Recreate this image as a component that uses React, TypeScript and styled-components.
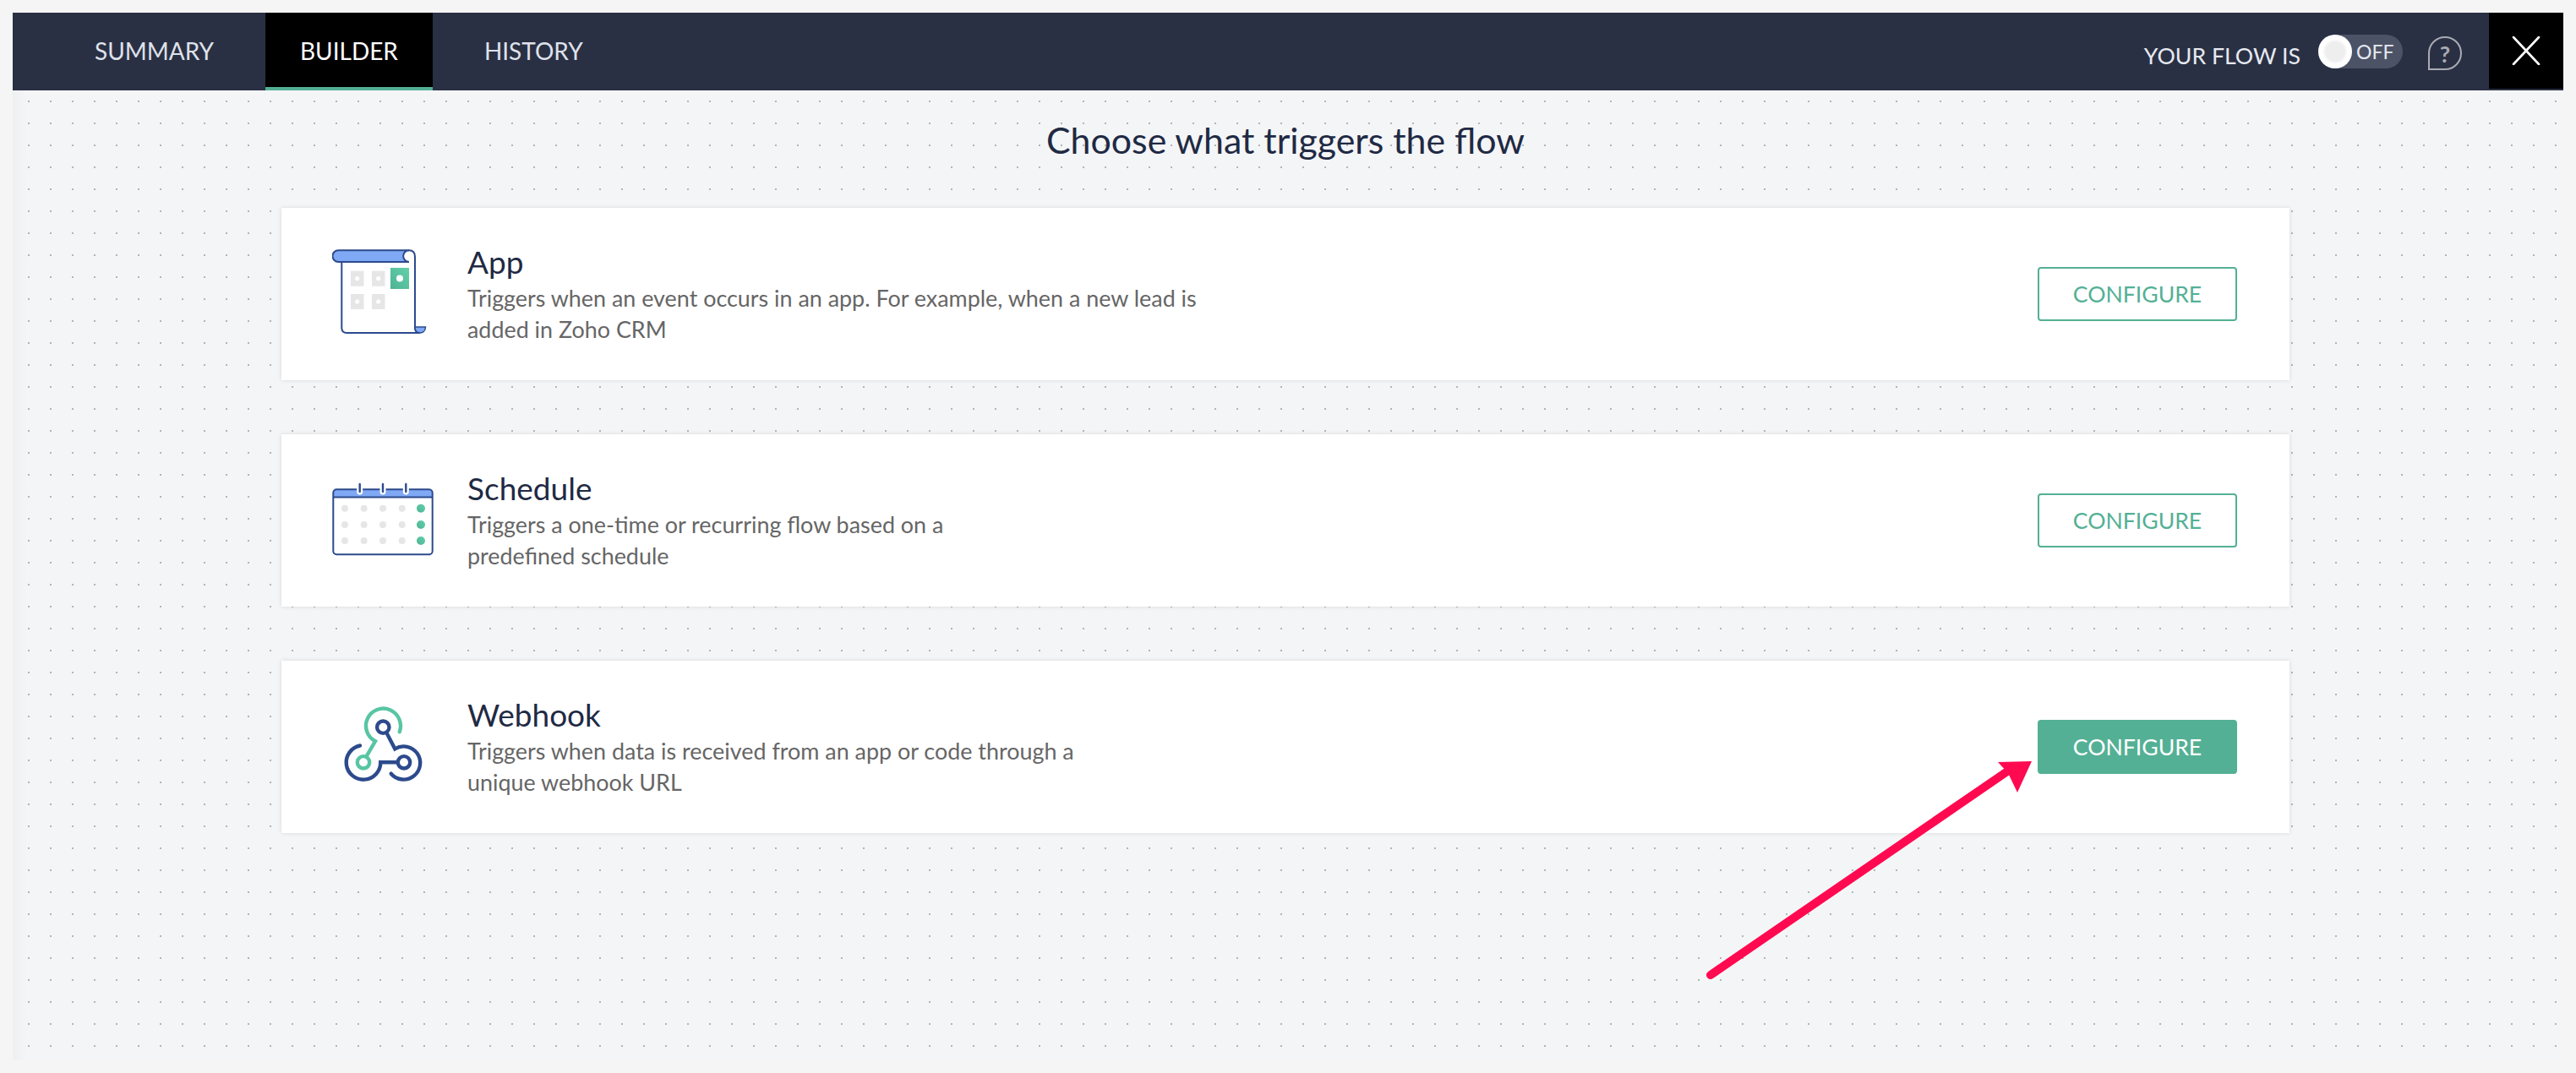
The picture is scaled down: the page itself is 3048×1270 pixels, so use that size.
import React from "react";
import styled, { createGlobalStyle } from "styled-components";

const Global = createGlobalStyle`
  html, body { margin: 0; padding: 0; background: #f5f5f5; }
  body { font-family: Lato, "Liberation Sans", sans-serif; }
  * { box-sizing: border-box; }
`;

const Page = styled.div`
  position: relative;
  width: 3048px;
  height: 1270px;
  padding: 15px;
  overflow: hidden;
`;

const Header = styled.header`
  display: flex;
  align-items: flex-start;
  height: 92px;
  background: #2a3044;
  padding-left: 56px;
`;

const Tabs = styled.nav`
  display: flex;
  gap: 20px;
`;

const Tab = styled.div<{ $active?: boolean }>`
  height: 92px;
  padding: 2px 41px 0;
  display: flex;
  align-items: center;
  font-size: 28px;
  font-weight: 400;
  color: ${(p) => (p.$active ? "#ffffff" : "#dfe2ea")};
  background: ${(p) => (p.$active ? "#000000" : "transparent")};
  border-bottom: 4px solid ${(p) => (p.$active ? "#54b095" : "transparent")};
`;

const Controls = styled.div`
  margin-left: auto;
  display: flex;
  align-items: center;
  height: 92px;
`;

const FlowLabel = styled.span`
  font-size: 26.7px;
  color: #e6e9f0;
  padding-top: 9px;
  margin-right: 21px;
`;

const Toggle = styled.div`
  width: 100px;
  height: 40px;
  border-radius: 20px;
  background: #4c5367;
  display: flex;
  align-items: center;
  gap: 5px;
  margin-right: 30px;
`;

const Knob = styled.span`
  width: 40px;
  height: 40px;
  border-radius: 50%;
  background: radial-gradient(circle at 50% 50%, #eeeeee 0 11px, #ffffff 15px);
`;

const ToggleText = styled.span`
  font-size: 23px;
  color: #e6e9f0;
`;

const HelpShape = styled.div`
  width: 40px;
  height: 40px;
  margin-top: 4px;
  margin-right: 32px;
  border: 2px solid #a9abb2;
  border-radius: 20px 20px 20px 0;
  display: flex;
  align-items: center;
  justify-content: center;
  color: #a9abb2;
  font-size: 27px;
  font-weight: 700;
`;

const CloseBox = styled.div`
  width: 88px;
  height: 90px;
  background: #000;
  display: flex;
  align-items: center;
  justify-content: center;
`;

const Canvas = styled.main`
  height: 1148px;
  background-color: #f4f5f7;
  background-image:
    linear-gradient(90deg, rgba(0, 0, 0, 0.025), rgba(0, 0, 0, 0) 18px),
    radial-gradient(circle at 1px 1px, #b4b4b4 1px, transparent 1.1px);
  background-size: 100% 100%, 26px 26px;
  background-position: 0 0, 18px 12px;
  background-repeat: no-repeat, repeat;
  padding: 34px 324px 0 318px;
  display: flex;
  flex-direction: column;
`;

const Title = styled.h1`
  margin: 0 0 55px;
  height: 50px;
  line-height: 50px;
  text-align: center;
  font-size: 42.85px;
  font-weight: 400;
  color: #1f2a44;
`;

const CardList = styled.div`
  display: flex;
  flex-direction: column;
  gap: 64px;
`;

const Card = styled.section`
  height: 204px;
  background: #fff;
  box-shadow: 0 0 5px rgba(0, 0, 0, 0.12);
  padding: 0 62px 0 60px;
  display: flex;
  align-items: center;
`;

const IconBox = styled.div`
  width: 124px;
  height: 124px;
  flex: none;
  margin-right: 36px;
`;

const CardText = styled.div`
  flex: 1;
  display: flex;
  flex-direction: column;
`;

const CardTitle = styled.h2`
  margin: 0 0 2px;
  font-size: 37px;
  line-height: 44px;
  font-weight: 400;
  color: #1f2a44;
`;

const CardDesc = styled.p`
  margin: 0;
  font-size: 26.9px;
  line-height: 37px;
  color: #666;
`;

const ConfigureButton = styled.button<{ $filled?: boolean }>`
  width: 236px;
  height: 64px;
  flex: none;
  border: 2px solid #54b095;
  border-radius: 4px;
  font-family: inherit;
  font-size: 26.6px;
  color: ${(p) => (p.$filled ? "#fff" : "#54b095")};
  background: ${(p) => (p.$filled ? "#54b095" : "#fff")};
`;

const ArrowOverlay = styled.svg`
  position: absolute;
  left: 2010px;
  top: 890px;
  width: 400px;
  height: 280px;
  pointer-events: none;
`;

const Blue = "#2c4a8c";
const Grey = "#e6e6e6";

const AppIcon = () => (
  <svg width="124" height="124" viewBox="0 0 124 124" fill="none">
    <defs>
      <linearGradient id="appG" x1="0" y1="1" x2="1" y2="0">
        <stop offset="0" stopColor="#4fb394" />
        <stop offset="1" stopColor="#62d0aa" />
      </linearGradient>
    </defs>
    <path d="M11.3 24 V102 Q11.3 108 17.3 108 H104" stroke={Blue} strokeWidth="2" />
    <path d="M90 10.3 H91 Q98 10.3 98 18 V102 Q98 108 104 108" stroke={Blue} strokeWidth="2" />
    <path d="M7.3 10.3 H91 A6.8 6.8 0 0 0 91 24 H7.3 A6.8 6.8 0 0 1 7.3 10.3 Z" fill="#7fa8f5" stroke={Blue} strokeWidth="2" />
    <path d="M98 101 H110.5 C110.5 106 107 108 104 108 C100 108 98 105 98 101 Z" fill="#7fa8f5" stroke={Blue} strokeWidth="1.5" />
    {[[22, 34.7], [47, 34.7], [22, 62], [47, 62]].map(([x, y]) => (
      <g key={`${x}-${y}`}>
        <rect x={x} y={y} width="15.5" height="18" fill={Grey} />
        <circle cx={x + 7.7} cy={y + 9} r="2.6" fill="#fff" />
      </g>
    ))}
    <rect x="69" y="31" width="22" height="25" fill="url(#appG)" />
    <circle cx="80" cy="43.5" r="4" fill="#fff" />
  </svg>
);

const ScheduleIcon = () => (
  <svg width="124" height="124" viewBox="0 0 124 124" fill="none">
    <defs>
      <linearGradient id="calG" x1="0" y1="1" x2="1" y2="0">
        <stop offset="0" stopColor="#4fb394" />
        <stop offset="1" stopColor="#62d0aa" />
      </linearGradient>
    </defs>
    <path d="M1.3 34 V29 Q1.3 25.3 5 25.3 H115 Q118.7 25.3 118.7 29 V34 Z" fill="#7fa8f5" />
    <rect x="1.3" y="25.3" width="117.4" height="77" rx="4" stroke={Blue} strokeWidth="2" />
    <path d="M1.3 34.5 H118.7" stroke={Blue} strokeWidth="2" />
    {[32.7, 60, 87.3].map((x) => (
      <g key={x}>
        <path d={`M${x} 21 V28`} stroke="#fff" strokeWidth="7" strokeLinecap="round" />
        <path d={`M${x} 19 V28`} stroke={Blue} strokeWidth="2.4" strokeLinecap="round" />
      </g>
    ))}
    {[47.7, 67, 86].map((y) => (
      <g key={y}>
        {[15, 37.7, 60, 82.7].map((x) => (
          <circle key={x} cx={x} cy={y} r="4" fill={Grey} />
        ))}
        <circle cx="105" cy={y} r="5" fill="url(#calG)" />
      </g>
    ))}
  </svg>
);

const WebhookIcon = () => (
  <svg width="124" height="124" viewBox="0 0 124 124" fill="none" strokeWidth="4.4" strokeLinecap="round">
    <path d="M79.7 44.3 A20.5 20.5 0 1 0 51 55.3 L40.3 73.7" stroke="#58c5a3" />
    <circle cx="37" cy="80.3" r="7.2" stroke="#58c5a3" />
    <circle cx="60.3" cy="38.7" r="7.2" stroke={Blue} />
    <circle cx="85" cy="80.3" r="7.2" stroke={Blue} />
    <path d="M65 46.5 L74.3 64.3 A19.6 19.6 0 1 1 69.7 93.7" stroke={Blue} />
    <path d="M76.3 80.3 H57.3 A20.3 20.3 0 1 1 33 60.5" stroke={Blue} />
  </svg>
);

const cards = [
  {
    title: "App",
    icon: <AppIcon />,
    lines: ["Triggers when an event occurs in an app. For example, when a new lead is", "added in Zoho CRM"],
  },
  {
    title: "Schedule",
    icon: <ScheduleIcon />,
    lines: ["Triggers a one-time or recurring flow based on a", "predefined schedule"],
  },
  {
    title: "Webhook",
    icon: <WebhookIcon />,
    lines: ["Triggers when data is received from an app or code through a", "unique webhook URL"],
    filled: true,
  },
];

export default function App() {
  return (
    <Page>
      <Global />
      <Header>
        <Tabs>
          <Tab>SUMMARY</Tab>
          <Tab $active>BUILDER</Tab>
          <Tab>HISTORY</Tab>
        </Tabs>
        <Controls>
          <FlowLabel>YOUR FLOW IS</FlowLabel>
          <Toggle>
            <Knob />
            <ToggleText>OFF</ToggleText>
          </Toggle>
          <HelpShape>?</HelpShape>
        </Controls>
        <CloseBox>
          <svg width="34" height="34" viewBox="0 0 34 34" fill="none">
            <path d="M2 1 L32 33 M32 1 L2 33" stroke="#fff" strokeWidth="2.6" strokeLinecap="round" />
          </svg>
        </CloseBox>
      </Header>
      <Canvas>
        <Title>Choose what triggers the flow</Title>
        <CardList>
          {cards.map((c) => (
            <Card key={c.title}>
              <IconBox>{c.icon}</IconBox>
              <CardText>
                <CardTitle>{c.title}</CardTitle>
                {c.lines.map((l) => (
                  <CardDesc key={l}>{l}</CardDesc>
                ))}
              </CardText>
              <ConfigureButton $filled={c.filled}>CONFIGURE</ConfigureButton>
            </Card>
          ))}
        </CardList>
      </Canvas>
      <ArrowOverlay viewBox="0 0 400 280">
        <path d="M14 264 L368 21" stroke="#ff0a50" strokeWidth="10" strokeLinecap="round" fill="none" />
        <path d="M394 11 L354 12 L366 25 L377 48 Z" fill="#ff0a50" />
      </ArrowOverlay>
    </Page>
  );
}
